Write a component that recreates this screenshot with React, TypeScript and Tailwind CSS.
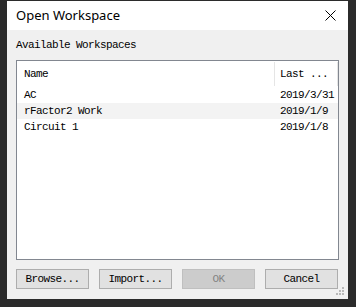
const mono = { fontFamily: '"Liberation Mono", "DejaVu Sans Mono", monospace' };

const rows = [
  { name: "AC", date: "2019/3/31" },
  { name: "rFactor2 Work", date: "2019/1/9" },
  { name: "Circuit 1", date: "2019/1/8" },
];

function Button({ label, disabled }: { label: string; disabled?: boolean }) {
  return (
    <div
      className={`flex h-[20px] w-[73px] items-center justify-center border text-[11px] tracking-[-0.6px] ${
        disabled ? "border-[#bfbfbf] bg-[#cccccc] text-[#838383]" : "border-[#adadad] bg-[#e1e1e1] text-black"
      }`}
      style={mono}
    >
      {label}
    </div>
  );
}

export default function App() {
  return (
    <div className="flex h-[307px] w-[356px] flex-col bg-[#2b2b2b] pt-[1px]">
      <div className="ml-[7px] flex h-[298px] w-[341px] flex-col bg-[#f0f0f0]">
        <div className="flex h-[29px] items-center justify-between bg-white pl-[9px] pr-[10px]">
          <span className="text-[13px] text-black" style={{ fontFamily: '"Noto Sans", sans-serif' }}>
            Open Workspace
          </span>
          <svg width="11" height="11" viewBox="0 0 11 11" className="mr-[2px]">
            <path d="M0.5 0.5 L10.5 10.5 M10.5 0.5 L0.5 10.5" stroke="#000" strokeWidth="1" />
          </svg>
        </div>
        <div className="flex flex-1 flex-col px-[9px]">
          <div className="pt-[9px] text-[11px] leading-[12px] tracking-[-0.6px] text-black" style={mono}>
            Available Workspaces
          </div>
          <div className="mt-[9px] h-[200px] border border-[#828790] bg-white pt-[1px]" style={mono}>
            <div className="flex h-[24px] text-[11px] tracking-[-0.6px] text-black">
              <div className="flex w-[257px] items-center pl-[7px]">Name</div>
              <div className="w-px bg-[#e5e5e5]" />
              <div className="flex w-[62px] items-center pl-[5px]">Last ...</div>
              <div className="w-px bg-[#e5e5e5]" />
            </div>
            <div className="mt-[1px]">
              {rows.map((r, i) => (
                <div
                  key={r.name}
                  className={`flex h-[16px] items-center text-[11px] tracking-[-0.6px] text-black ${
                    i === 1 ? "bg-[#f3f3f3]" : ""
                  }`}
                >
                  <div className="w-[258px] pl-[7px]">{r.name}</div>
                  <div className="pl-[5px]">{r.date}</div>
                </div>
              ))}
            </div>
          </div>
          <div className="mt-[9px] flex">
            <Button label="Browse..." />
            <div className="ml-[10px]">
              <Button label="Import..." />
            </div>
            <div className="ml-[10px]">
              <Button label="OK" disabled />
            </div>
            <div className="ml-[10px]">
              <Button label="Cancel" />
            </div>
          </div>
          <div className="flex justify-end pr-[-6px]">
            <svg width="9" height="9" viewBox="0 0 9 9" className="-mr-[6px] mt-[-2px]">
              <rect x="6" y="0" width="2" height="2" fill="#b8b8b8" />
              <rect x="3" y="3" width="2" height="2" fill="#b8b8b8" />
              <rect x="6" y="3" width="2" height="2" fill="#b8b8b8" />
              <rect x="0" y="6" width="2" height="2" fill="#b8b8b8" />
              <rect x="3" y="6" width="2" height="2" fill="#b8b8b8" />
              <rect x="6" y="6" width="2" height="2" fill="#b8b8b8" />
            </svg>
          </div>
        </div>
      </div>
    </div>
  );
}
